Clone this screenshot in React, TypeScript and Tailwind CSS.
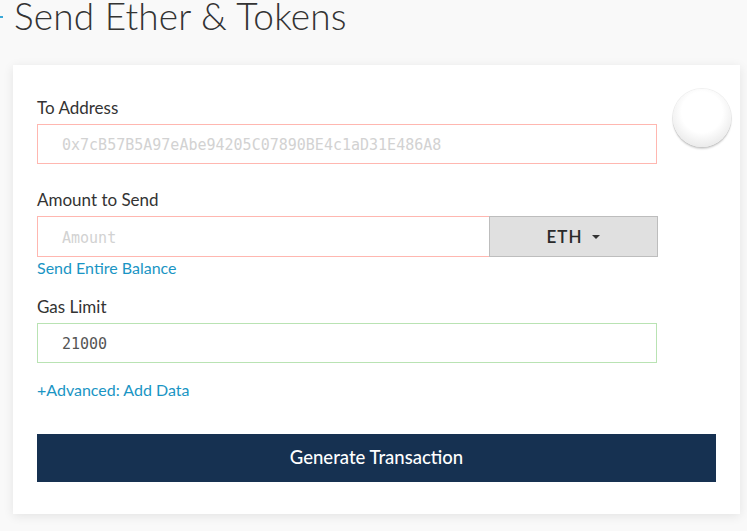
import React from "react";

export default function App() {
  return (
    <div className="w-[747px] h-[531px] overflow-hidden bg-[#f9f9f9] relative" style={{ fontFamily: "Lato, 'Open Sans', sans-serif" }}>
      <span className="absolute left-0 top-[16px] w-[3px] h-[2px] bg-[#3aa8d8]" />
      <h1 className="ml-[14px] mt-[-3px] text-[37px] leading-none font-light text-[#333] tracking-[0.2px]">Send Ether &amp; Tokens</h1>
      <div className="ml-[13px] mt-[31px] w-[727px] h-[449px] bg-white shadow-[0_2px_10px_rgba(0,0,0,0.09)] pl-[24px] pr-[24px] pt-[33px] flex flex-col">
        <div className="flex">
          <div className="w-[620px] shrink-0 flex flex-col">
            <label className="text-[17px] leading-[20px] text-[#333]">To Address</label>
            <div className="mt-[6px] h-[40px] border border-[#ffb7b0] flex items-center pl-[24px] pt-[3px] text-[15px] text-[#d2d2d2]" style={{ fontFamily: "'DejaVu Sans Mono', monospace" }}>
              0x7cB57B5A97eAbe94205C07890BE4c1aD31E486A8
            </div>
          </div>
          <div className="ml-[16px] mt-[-9px] shrink-0 w-[58px] h-[58px] rounded-full bg-[radial-gradient(circle_at_50%_40%,#ffffff_45%,#ececec_75%,#b8b8b8_100%)] shadow-[0_0_0_1px_rgba(0,0,0,0.06),0_2px_2px_rgba(0,0,0,0.18)]" />
        </div>
        <label className="mt-[26px] text-[17px] leading-[20px] text-[#333]">Amount to Send</label>
        <div className="mt-[6px] flex w-[621px] h-[41px]">
          <div className="w-[452px] border border-[#ffb7b0] border-r-0 flex items-center pl-[24px] pt-[3px] text-[15px] text-[#d2d2d2]" style={{ fontFamily: "'DejaVu Sans Mono', monospace" }}>
            Amount
          </div>
          <div className="flex-1 bg-[#e0e0e0] border border-[#bdbdbd] flex items-center justify-center gap-[10px] text-[17px] font-semibold tracking-[1px] text-[#2a2a2a]">
            <span>ETH</span>
            <span className="w-0 h-0 border-l-[4px] border-r-[4px] border-t-[4px] border-l-transparent border-r-transparent border-t-[#333]" />
          </div>
        </div>
        <a className="mt-[1px] text-[16px] leading-[20px] text-[#1a95c4]">Send Entire Balance</a>
        <label className="mt-[19px] text-[17px] leading-[20px] text-[#333]">Gas Limit</label>
        <div className="mt-[6px] w-[620px] h-[40px] border border-[#b9e3b3] flex items-center pl-[24px] pt-[3px] text-[15px] text-[#555]" style={{ fontFamily: "'DejaVu Sans Mono', monospace" }}>
          21000
        </div>
        <a className="mt-[17px] text-[16px] leading-[20px] text-[#1a95c4]">+Advanced: Add Data</a>
        <button className="mt-[34px] h-[48px] w-full bg-[#163151] text-white text-[18.5px] font-medium">Generate Transaction</button>
      </div>
    </div>
  );
}
